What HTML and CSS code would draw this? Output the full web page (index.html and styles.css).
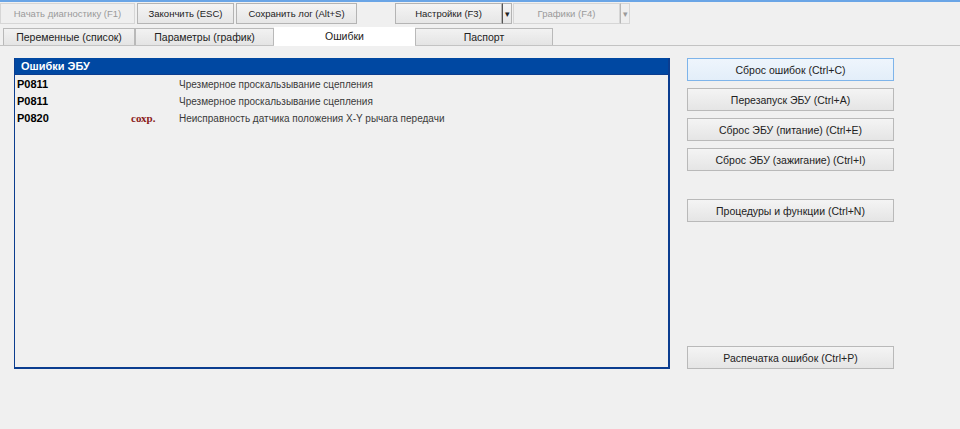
FILE: index.html
```html
<!DOCTYPE html>
<html lang="ru">
<head>
<meta charset="UTF-8" />
<title>Ошибки ЭБУ</title>
<link rel="stylesheet" href="styles.css">
</head>
<body>
  <div class="topline"></div>

  <div class="toolbar">
    <button class="tb disabled w135">Начать диагностику (F1)</button>
    <button class="tb w97">Закончить (ESC)</button>
    <button class="tb w120">Сохранить лог (Alt+S)</button>
    <div class="split">
      <button class="tb w107">Настройки (F3)</button>
      <button class="tb arrow">&#9662;</button>
    </div>
    <div class="split off">
      <button class="tb disabled w107">Графики (F4)</button>
      <button class="tb arrow disabled">&#9662;</button>
    </div>
  </div>

  <div class="tabs">
    <div class="tab w131">Переменные (список)</div>
    <div class="tab w138">Параметры (график)</div>
    <div class="tab active w140">Ошибки</div>
    <div class="tab w137">Паспорт</div>
  </div>

  <div class="main">
    <div class="panel">
      <div class="panel-head">Ошибки ЭБУ</div>
      <div class="rows">
        <div class="row"><span class="code">P0811</span><span class="flag"></span><span class="desc">Чрезмерное проскальзывание сцепления</span></div>
        <div class="row"><span class="code">P0811</span><span class="flag"></span><span class="desc">Чрезмерное проскальзывание сцепления</span></div>
        <div class="row"><span class="code">P0820</span><span class="flag">сохр.</span><span class="desc">Неисправность датчика положения X-Y рычага передачи</span></div>
      </div>
    </div>

    <div class="actions">
      <button class="act focused">Сброс ошибок (Ctrl+C)</button>
      <button class="act">Перезапуск ЭБУ (Ctrl+A)</button>
      <button class="act">Сброс ЭБУ (питание) (Ctrl+E)</button>
      <button class="act">Сброс ЭБУ (зажигание) (Ctrl+I)</button>
      <button class="act gap">Процедуры и функции (Ctrl+N)</button>
      <button class="act bottom">Распечатка ошибок (Ctrl+P)</button>
    </div>
  </div>
</body>
</html>
```

FILE: styles.css
```css
body {
  margin: 0;
  background: #f0f0f0;
  font-family: 'Liberation Sans', Arial, sans-serif;
  color: #1a1a1a;
  width: 960px;
  height: 429px;
  overflow: hidden;
}
button {
  font-family: inherit;
  margin: 0;
}
.topline {
  height: 2px;
  background: #6aa5e6;
}

.toolbar {
  display: flex;
  height: 21px;
  padding-top: 1px;
}
.tb {
  height: 21px;
  border: 1px solid #b4b4b4;
  background: linear-gradient(#f4f4f4, #e6e6e6);
  font-size: 9.5px;
  color: #222;
  padding: 0;
  margin-right: 2px;
}
.tb.disabled {
  color: #9a9a9a;
  background: #efefef;
  border-color: #d6d6d6;
}
.w135 { width: 135px; }
.w97 { width: 97px; }
.w120 { width: 121px; margin-right: 38px; }
.w107 { width: 107px; margin-right: 0; }
.split {
  display: flex;
  margin-right: 1px;
}
.tb.arrow {
  width: 10px;
  font-size: 9px;
  border-left: 1px solid #555;
  margin-right: 0;
  color: #222;
}
.off .tb.arrow {
  border-left-color: #b8b8b8;
  color: #9a9a9a;
}

.tabs {
  display: flex;
  padding-left: 3px;
  margin-top: 4px;
  border-bottom: 1px solid #c3c3c3;
  height: 17px;
}
.tab {
  height: 16px;
  line-height: 16px;
  border: 1px solid #b9b9b9;
  border-bottom: none;
  background: linear-gradient(#f2f2f2, #e4e4e4);
  text-align: center;
  font-size: 10.5px;
  color: #222;
}
.tab.active {
  background: #ffffff;
  height: 18px;
  margin-top: -1px;
  border-color: #ffffff;
}
.w131 { width: 130px; }
.w138 { width: 137px; }
.w140 { width: 139px; }
.w137 { width: 136px; }

.main {
  display: flex;
  padding: 12px 0 0 14px;
}
.panel {
  width: 653px;
  height: 309px;
  border: 2px solid #0b3d8f;
  border-top: none;
  border-left-width: 1px;
  border-bottom-width: 2px;
  background: #f0f0f0;
}
.panel-head {
  background: #0048a2;
  color: #ffffff;
  font-weight: bold;
  font-size: 11px;
  height: 16px;
  line-height: 16px;
  padding-left: 6px;
  border-bottom: 1px solid #0b3d8f;
}
.rows {
  padding-top: 1px;
}
.row {
  display: flex;
  align-items: baseline;
  height: 17px;
  line-height: 17px;
  padding-left: 2px;
}
.code {
  width: 114px;
  font-weight: bold;
  font-size: 11px;
  color: #000;
}
.flag {
  width: 48px;
  font-family: 'Liberation Serif', 'Times New Roman', serif;
  font-weight: bold;
  font-size: 11px;
  color: #8a1a1a;
}
.desc {
  font-size: 10px;
  color: #3a3a3a;
}

.actions {
  display: flex;
  flex-direction: column;
  margin-left: 17px;
  width: 207px;
}
.act {
  height: 23px;
  margin-bottom: 7px;
  border: 1px solid #b9b9b9;
  background: linear-gradient(#f4f4f4, #e5e5e5);
  font-size: 10.5px;
  color: #222;
}
.act.focused {
  border-color: #7eb4ea;
  background: linear-gradient(#eef5fc, #e3eef9);
}
.act.gap {
  margin-top: 21px;
}
.act.bottom {
  margin-top: 117px;
}
```
